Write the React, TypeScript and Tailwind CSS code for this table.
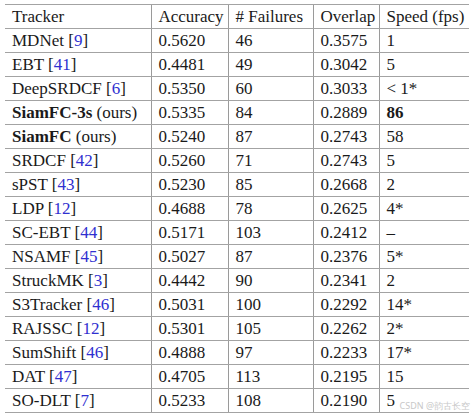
import React from 'react';

type Row = {
  name: string;
  bold?: boolean;
  ours?: boolean;
  cite?: string;
  acc: string;
  fail: string;
  overlap: string;
  speed: string;
  speedBold?: boolean;
};

const rows: Row[] = [
  { name: "MDNet", cite: "9", acc: "0.5620", fail: "46", overlap: "0.3575", speed: "1" },
  { name: "EBT", cite: "41", acc: "0.4481", fail: "49", overlap: "0.3042", speed: "5" },
  { name: "DeepSRDCF", cite: "6", acc: "0.5350", fail: "60", overlap: "0.3033", speed: "< 1*" },
  { name: "SiamFC-3s", bold: true, ours: true, acc: "0.5335", fail: "84", overlap: "0.2889", speed: "86", speedBold: true },
  { name: "SiamFC", bold: true, ours: true, acc: "0.5240", fail: "87", overlap: "0.2743", speed: "58" },
  { name: "SRDCF", cite: "42", acc: "0.5260", fail: "71", overlap: "0.2743", speed: "5" },
  { name: "sPST", cite: "43", acc: "0.5230", fail: "85", overlap: "0.2668", speed: "2" },
  { name: "LDP", cite: "12", acc: "0.4688", fail: "78", overlap: "0.2625", speed: "4*" },
  { name: "SC-EBT", cite: "44", acc: "0.5171", fail: "103", overlap: "0.2412", speed: "–" },
  { name: "NSAMF", cite: "45", acc: "0.5027", fail: "87", overlap: "0.2376", speed: "5*" },
  { name: "StruckMK", cite: "3", acc: "0.4442", fail: "90", overlap: "0.2341", speed: "2" },
  { name: "S3Tracker", cite: "46", acc: "0.5031", fail: "100", overlap: "0.2292", speed: "14*" },
  { name: "RAJSSC", cite: "12", acc: "0.5301", fail: "105", overlap: "0.2262", speed: "2*" },
  { name: "SumShift", cite: "46", acc: "0.4888", fail: "97", overlap: "0.2233", speed: "17*" },
  { name: "DAT", cite: "47", acc: "0.4705", fail: "113", overlap: "0.2195", speed: "15" },
  { name: "SO-DLT", cite: "7", acc: "0.5233", fail: "108", overlap: "0.2190", speed: "5" },
];

const cell = "h-[24px] p-0 pl-[7px] text-left align-middle border-y border-[#a3a3a3] whitespace-nowrap";
const sep = "border-l border-l-[#9a9a9a]";

export default function App() {
  return (
    <div className="relative w-[474px] h-[416px] bg-white pt-[4px] pl-[5px] text-[17px] leading-none text-[#1a1a1a] font-serif">
      <table className="table-fixed border-collapse w-[464px] [font-family:Liberation_Serif,serif]">
        <colgroup>
          <col className="w-[146px]" />
          <col className="w-[77px]" />
          <col className="w-[85px]" />
          <col className="w-[66px]" />
          <col className="w-[90px]" />
        </colgroup>
        <thead>
          <tr>
            <th className={`${cell} font-normal`}>Tracker</th>
            <th className={`${cell} ${sep} font-normal`}>Accuracy</th>
            <th className={`${cell} ${sep} font-normal`}># Failures</th>
            <th className={`${cell} ${sep} font-normal`}>Overlap</th>
            <th className={`${cell} ${sep} font-normal`}>Speed (fps)</th>
          </tr>
        </thead>
        <tbody>
          {rows.map((r, i) => (
            <tr key={i}>
              <td className={cell}>
                <span className={r.bold ? "font-bold" : ""}>{r.name}</span>
                {r.ours && <span> (ours)</span>}
                {r.cite && (
                  <span>
                    {" "}[<span className="text-[#2f2fd0]">{r.cite}</span>]
                  </span>
                )}
              </td>
              <td className={`${cell} ${sep}`}>{r.acc}</td>
              <td className={`${cell} ${sep}`}>{r.fail}</td>
              <td className={`${cell} ${sep}`}>{r.overlap}</td>
              <td className={`${cell} ${sep} ${r.speedBold ? "font-bold" : ""}`}>{r.speed}</td>
            </tr>
          ))}
        </tbody>
      </table>
      <div className="absolute right-[4px] bottom-[6px] text-[9px] text-[#c8c8c8] font-sans">
        CSDN @韵古长空
      </div>
    </div>
  );
}
